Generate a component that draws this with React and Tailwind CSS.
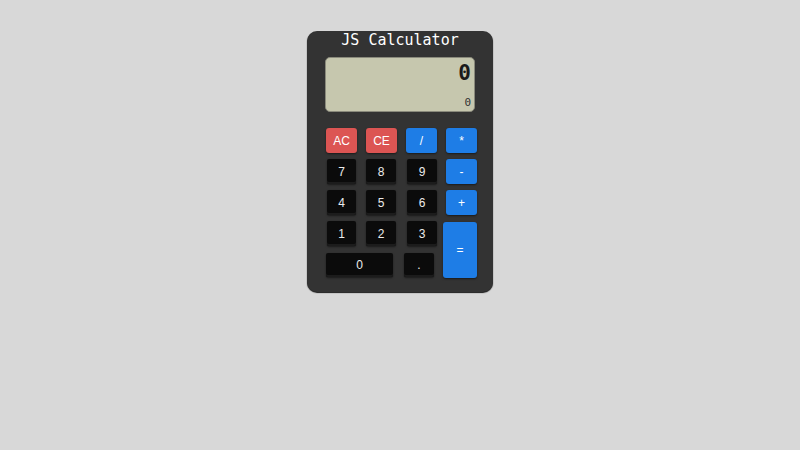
export default function App() {
  const dark =
    "flex items-center justify-center rounded-[2px] bg-[#0b0b0b] text-[12px] text-[#ececec] shadow-[inset_0_-2px_0_#1c1c1c,0_1px_2px_rgba(0,0,0,0.5)]";
  const red =
    "flex items-center justify-center rounded-[3px] bg-[#dc5553] text-[12px] text-white shadow-[0_1px_2px_rgba(0,0,0,0.5)]";
  const blue =
    "flex items-center justify-center rounded-[3px] bg-[#1e7de6] text-[12px] text-white shadow-[0_1px_2px_rgba(0,0,0,0.5)]";

  return (
    <div className="min-h-[450px] w-full bg-[#d8d8d8] pt-[31px]" style={{ fontFamily: '"Liberation Sans", Arial, sans-serif' }}>
      <div className="ml-[307px] h-[261px] w-[186px] rounded-[10px] bg-[#333333] shadow-[0_1px_1px_#1a1a1a]">
        <div
          className="h-[26px] pt-[0px] text-center text-[15px] leading-[18px] text-white"
          style={{ fontFamily: '"DejaVu Sans Mono", monospace' }}
        >
          JS Calculator
        </div>
        <div
          className="ml-[18px] flex h-[55px] w-[150px] flex-col items-end rounded-[5px] border border-[#8a8a7c] bg-[#c6c7ae] pr-[3px]"
          style={{ fontFamily: '"DejaVu Sans Mono", monospace' }}
        >
          <div className="mt-[2px] text-[21px] font-bold leading-[26px] text-[#1a1a1a]">0</div>
          <div className="mt-auto mb-[1px] text-[11px] leading-[14px] text-[#333]">0</div>
        </div>
        <div className="ml-[19px] mt-[16px] grid grid-cols-[31px_31px_31px_31px] grid-rows-[25px_25px_25px_25px_25px] gap-x-[9px] gap-y-[6px]">
          <div className={red}>AC</div>
          <div className={red}>CE</div>
          <div className={blue}>/</div>
          <div className={blue}>*</div>

          <div className={`${dark} ml-[1px] w-[29px]`}>7</div>
          <div className={`${dark} w-[30px]`}>8</div>
          <div className={`${dark} ml-[1px] w-[30px]`}>9</div>
          <div className={blue}>-</div>

          <div className={`${dark} ml-[1px] w-[29px]`}>4</div>
          <div className={`${dark} w-[30px]`}>5</div>
          <div className={`${dark} ml-[1px] w-[30px]`}>6</div>
          <div className={blue}>+</div>

          <div className={`${dark} ml-[1px] w-[29px]`}>1</div>
          <div className={`${dark} w-[30px]`}>2</div>
          <div className={`${dark} ml-[1px] w-[30px]`}>3</div>
          <div className={`${blue} row-span-2 -ml-[3px] mt-[1px] h-[56px]`}>=</div>

          <div className={`${dark} col-span-2 w-[67px] mt-[1px]`}>0</div>
          <div className={`${dark} -ml-[2px] mt-[1px] w-[30px]`}>.</div>
        </div>
      </div>
    </div>
  );
}
